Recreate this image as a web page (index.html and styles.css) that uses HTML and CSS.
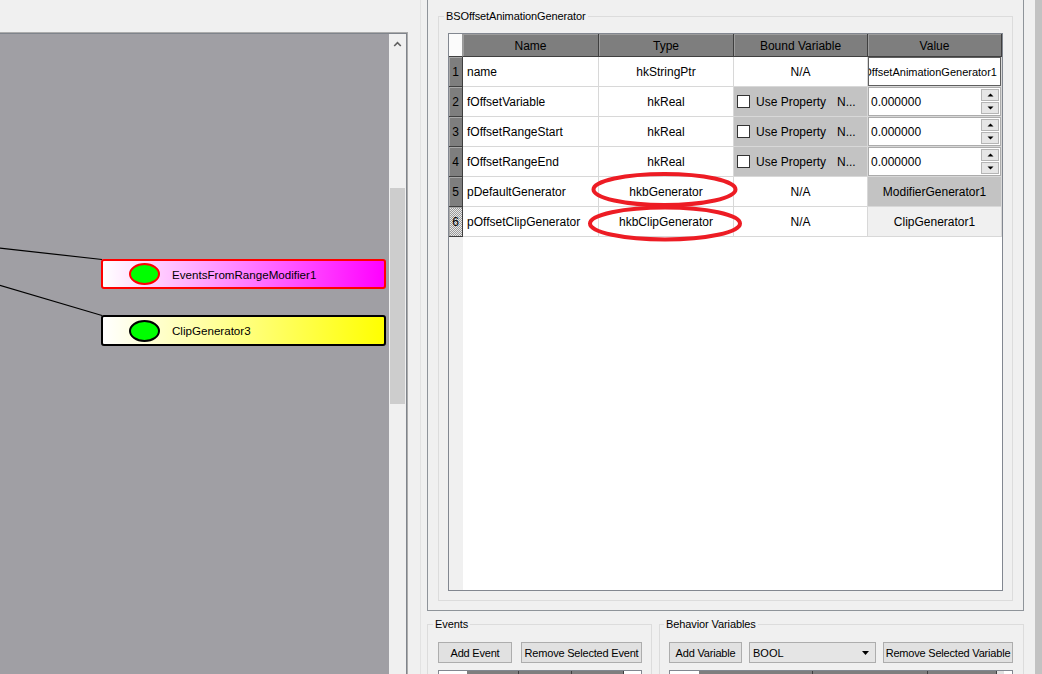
FILE: index.html
```html
<!DOCTYPE html>
<html>
<head>
<meta charset="utf-8">
<title>Behavior Editor</title>
<link rel="stylesheet" href="styles.css">
</head>
<body>
<div class="app">
  <div class="left">
    <div class="canvas-frame">
      <div class="canvas-inner">
        <div class="canvas">
          <svg class="edges" width="389" height="640" viewBox="0 0 389 640">
            <line x1="-1" y1="214" x2="102" y2="225.5"/>
            <line x1="-1" y1="251" x2="102" y2="281.5"/>
          </svg>
          <div class="node node-1"><span class="dot"></span><span class="label">EventsFromRangeModifier1</span></div>
          <div class="node node-2"><span class="dot"></span><span class="label">ClipGenerator3</span></div>
        </div>
        <div class="vscroll">
          <div class="sb-btn"><svg width="9" height="6" viewBox="0 0 9 6"><path d="M1.2 5 L4.5 1.6 L7.8 5"/></svg></div>
          <div class="sb-thumb"></div>
        </div>
      </div>
    </div>
  </div>
  <div class="gap"></div>
  <div class="right">
    <div class="props-frame">
      <fieldset class="group props">
        <legend>BSOffsetAnimationGenerator</legend>
        <div class="ptable">
          <div class="pgrid">
            <div class="corner"></div>
            <div class="hh">Name</div>
            <div class="hh">Type</div>
            <div class="hh">Bound Variable</div>
            <div class="hh">Value</div>

            <div class="vh">1</div>
            <div class="c c-name">name</div>
            <div class="c c-mid">hkStringPtr</div>
            <div class="c c-mid">N/A</div>
            <div class="c c-val"><div class="lineedit"><span>BSOffsetAnimationGenerator1</span></div></div>

            <div class="vh">2</div>
            <div class="c c-name">fOffsetVariable</div>
            <div class="c c-mid">hkReal</div>
            <div class="c c-bind"><span class="cb"></span><span class="up">Use Property</span><span class="nn">N...</span></div>
            <div class="c c-val"><div class="spin"><span>0.000000</span><span class="spin-btns"><span class="sbtn"><svg width="7" height="4" viewBox="0 0 7 4"><path d="M0.5 3.5 L3.5 0.5 L6.5 3.5Z"/></svg></span><span class="sbtn"><svg width="7" height="4" viewBox="0 0 7 4"><path d="M0.5 0.5 L3.5 3.5 L6.5 0.5Z"/></svg></span></span></div></div>

            <div class="vh">3</div>
            <div class="c c-name">fOffsetRangeStart</div>
            <div class="c c-mid">hkReal</div>
            <div class="c c-bind"><span class="cb"></span><span class="up">Use Property</span><span class="nn">N...</span></div>
            <div class="c c-val"><div class="spin"><span>0.000000</span><span class="spin-btns"><span class="sbtn"><svg width="7" height="4" viewBox="0 0 7 4"><path d="M0.5 3.5 L3.5 0.5 L6.5 3.5Z"/></svg></span><span class="sbtn"><svg width="7" height="4" viewBox="0 0 7 4"><path d="M0.5 0.5 L3.5 3.5 L6.5 0.5Z"/></svg></span></span></div></div>

            <div class="vh">4</div>
            <div class="c c-name">fOffsetRangeEnd</div>
            <div class="c c-mid">hkReal</div>
            <div class="c c-bind"><span class="cb"></span><span class="up">Use Property</span><span class="nn">N...</span></div>
            <div class="c c-val"><div class="spin"><span>0.000000</span><span class="spin-btns"><span class="sbtn"><svg width="7" height="4" viewBox="0 0 7 4"><path d="M0.5 3.5 L3.5 0.5 L6.5 3.5Z"/></svg></span><span class="sbtn"><svg width="7" height="4" viewBox="0 0 7 4"><path d="M0.5 0.5 L3.5 3.5 L6.5 0.5Z"/></svg></span></span></div></div>

            <div class="vh">5</div>
            <div class="c c-name">pDefaultGenerator</div>
            <div class="c c-mid">hkbGenerator</div>
            <div class="c c-mid">N/A</div>
            <div class="c c-mid c-gray">ModifierGenerator1</div>

            <div class="vh vh-cur">6</div>
            <div class="c c-name">pOffsetClipGenerator</div>
            <div class="c c-mid">hkbClipGenerator</div>
            <div class="c c-mid">N/A</div>
            <div class="c c-mid c-light">ClipGenerator1</div>
          </div>
          <svg class="marks" width="553" height="556" viewBox="0 0 553 556">
            <ellipse cx="215.5" cy="155.5" rx="71" ry="15.5"/>
            <ellipse cx="216" cy="189.5" rx="75" ry="16"/>
          </svg>
        </div>
      </fieldset>
    </div>
    <div class="bottom">
      <fieldset class="group ev">
        <legend>Events</legend>
        <div class="btnrow">
          <div class="btn b-addev">Add Event</div>
          <div class="btn b-remev">Remove Selected Event</div>
        </div>
        <div class="mini">
          <div></div><div class="mh"></div><div class="mh"></div><div class="mh"></div><div></div>
        </div>
      </fieldset>
      <fieldset class="group bv">
        <legend>Behavior Variables</legend>
        <div class="btnrow">
          <div class="btn b-addvar">Add Variable</div>
          <div class="combo"><span>BOOL</span><svg width="7" height="4" viewBox="0 0 7 4"><path d="M0 0 L7 0 L3.5 4Z"/></svg></div>
          <div class="btn b-remvar">Remove Selected Variable</div>
        </div>
        <div class="mini">
          <div></div><div class="mh"></div><div class="mh"></div><div class="mh"></div><div class="ms"></div><div></div>
        </div>
      </fieldset>
    </div>
  </div>
  <div class="edge-bar"></div>
</div>
</body>
</html>
```
FILE: styles.css
```css
* { box-sizing: border-box; }
html, body { margin: 0; padding: 0; }
body {
  width: 1042px; height: 674px; overflow: hidden;
  background: #f0f0f0;
  font-family: "Liberation Sans", Arial, sans-serif;
  font-size: 12px; color: #000;
}
.app { display: flex; width: 1042px; height: 674px; overflow: hidden; }

/* ---------- left: graph canvas ---------- */
.left { flex: none; width: 409px; padding-top: 32px; }
.canvas-frame {
  margin-left: -2px; width: 410px; height: 660px;
  border: 1px solid #acacac; display: flex;
}
.canvas-inner { flex: 1; display: flex; border: 1px solid #7f848b; }
.canvas {
  flex: none; width: 389px; position: relative; overflow: hidden;
  background: #a09fa4;
}
.edges { position: absolute; left: 0; top: 0; }
.edges line { stroke: #000; stroke-width: 1.2; }
.node {
  position: absolute; width: 285px; height: 30px;
  border: 2px solid; border-radius: 3px;
  display: flex; align-items: center; padding-left: 26px;
  font-size: 11.6px; color: #000;
}
.node-1 { left: 101px; top: 225px; border-color: #ff0000; background: linear-gradient(to right, #ffffff 0%, #ff00ff 100%); }
.node-2 { left: 101px; top: 281px; height: 31px; border-color: #000; background: linear-gradient(to right, #ffffff 0%, #ffff00 100%); }
.dot {
  flex: none; width: 31px; height: 22px; border-radius: 50%;
  background: #00ff00; border: 2px solid; margin-right: 12px;
}
.node-1 .dot { border-color: #ff0000; }
.node-2 .dot { border-color: #000; }

.vscroll { flex: none; width: 17px; background: #f0f0f0; display: flex; flex-direction: column; }
.sb-btn { height: 20px; display: flex; align-items: center; justify-content: center; }
.sb-btn path { fill: none; stroke: #606060; stroke-width: 1.6; }
.sb-thumb { margin: 134px 1px 0 1px; height: 216px; background: #cdcdcd; }

/* ---------- right: properties ---------- */
.gap { flex: none; width: 11px; }
.right {
  flex: none; width: 615px; border-left: 1px solid #e2e2e2;
  padding: 0 11px 0 6px; display: flex; flex-direction: column;
}
.edge-bar { flex: none; width: 7px; background: #c2c2c2; }

.props-frame {
  flex: none; margin-top: -10px; height: 621px;
  border: 1px solid #8f949a; padding: 0 10px;
}
.group { margin: 0; border: 1px solid #dcdcdc; min-width: 0; }
.group legend { font-size: 11px; line-height: 14px; padding: 0 2px; letter-spacing: -0.1px; }
.props { margin-top: 18px; padding: 10px 9px 9px 9px; }
.props legend { margin-left: -4px; }

.ptable {
  position: relative; height: 558px;
  border: 1px solid #828790;
  background: linear-gradient(to right, #f0f0f0 14px, #ffffff 14px);
}
.pgrid {
  display: grid;
  grid-template-columns: 14px 136px 135px 134px 134px;
  grid-template-rows: 23px repeat(6, 30px);
}
.corner { background: #fbfbfb; border-bottom: 1px solid #3f3f3f; border-right: 1px solid #9a9a9a; }
.hh {
  background: #7e7e7e; border-right: 1px solid #3f3f3f; border-bottom: 1px solid #3f3f3f;
  box-shadow: inset 1px 1px 0 #9c9c9c;
  display: flex; align-items: center; justify-content: center; padding-top: 1px;
}
.vh {
  background: #7e7e7e; border-right: 1px solid #3f3f3f; border-bottom: 1px solid #3f3f3f;
  box-shadow: inset 1px 1px 0 #a8a8a8;
  display: flex; align-items: center; justify-content: center; padding-top: 1px;
}
.vh-cur {
  background: repeating-conic-gradient(#9a9a9a 0 25%, #e8e8e8 0 50%) 0 0 / 2px 2px;
}
.c {
  background: #fff; border-right: 1px solid #d8d8d8; border-bottom: 1px solid #d8d8d8;
  display: flex; align-items: center; white-space: nowrap; overflow: hidden;
}
.c-name { padding-left: 4px; }
.c-mid { justify-content: center; }
.c-gray { background: #c3c3c3; }
.c-light { background: #f0f0f0; }
.c-bind { background: #c3c3c3; padding-left: 3px; }
.cb { flex: none; width: 13px; height: 13px; border: 1px solid #333; background: #fff; }
.up { margin-left: 6px; }
.nn { margin-left: 11px; }
.c-val { align-items: stretch; }
.lineedit {
  flex: 1; border: 1px solid #5f5f5f; background: #fff;
  display: flex; align-items: center; justify-content: flex-end;
  padding-right: 3px; overflow: hidden; white-space: nowrap;
  font-size: 11px;
}
.lineedit span { flex: none; }
.spin {
  flex: 1; border: 1px solid #acacac; background: #fff;
  display: flex; align-items: center; padding-left: 2px;
}
.spin-btns { margin-left: auto; margin-right: 1px; width: 18px; display: flex; flex-direction: column; gap: 1px; }
.sbtn {
  height: 12px; background: #e6e6e6; border: 1px solid #b5b5b5;
  display: flex; align-items: center; justify-content: center;
}
.sbtn path { fill: #000; }
.marks { position: absolute; left: 0; top: 0; overflow: visible; pointer-events: none; }
.marks ellipse { fill: none; stroke: #ed1c24; stroke-width: 4; }

/* ---------- bottom groups ---------- */
.bottom { flex: none; display: flex; gap: 7px; margin-top: 6px; }
.ev { width: 225px; height: 80px; padding: 11px 9px 0 10px; }
.bv { width: 365px; height: 80px; padding: 11px 10px 0 9px; }
.ev legend, .bv legend { margin-left: -5px; }
.btnrow { display: flex; height: 21px; }
.btn {
  height: 21px; border: 1px solid #adadad; background: #e1e1e1;
  font-size: 11px; letter-spacing: -0.2px;
  display: flex; align-items: center; justify-content: center;
  white-space: nowrap;
}
.b-addev { width: 74px; }
.b-remev { width: 121px; margin-left: 9px; }
.b-addvar { width: 73px; }
.b-remvar { width: 130px; margin-left: 7px; }
.combo {
  width: 127px; margin-left: 7px; height: 21px;
  border: 1px solid #adadad; background: #e5e5e5;
  font-size: 11px; display: flex; align-items: center; justify-content: space-between;
  padding: 0 6px 0 3px;
}
.combo path { fill: #000; }
.mini {
  margin-top: 7px; height: 22px; border: 1px solid #828790; background: #fff;
  display: grid;
}
.ev .mini { grid-template-columns: 28px 52px 53px 52px 1fr; }
.bv .mini { grid-template-columns: 29px 114px 115px 69px 7px 1fr; }
.mh { background: #7e7e7e; border-right: 1px solid #3f3f3f; }
.ms { background: #e2e2e2; }
```
